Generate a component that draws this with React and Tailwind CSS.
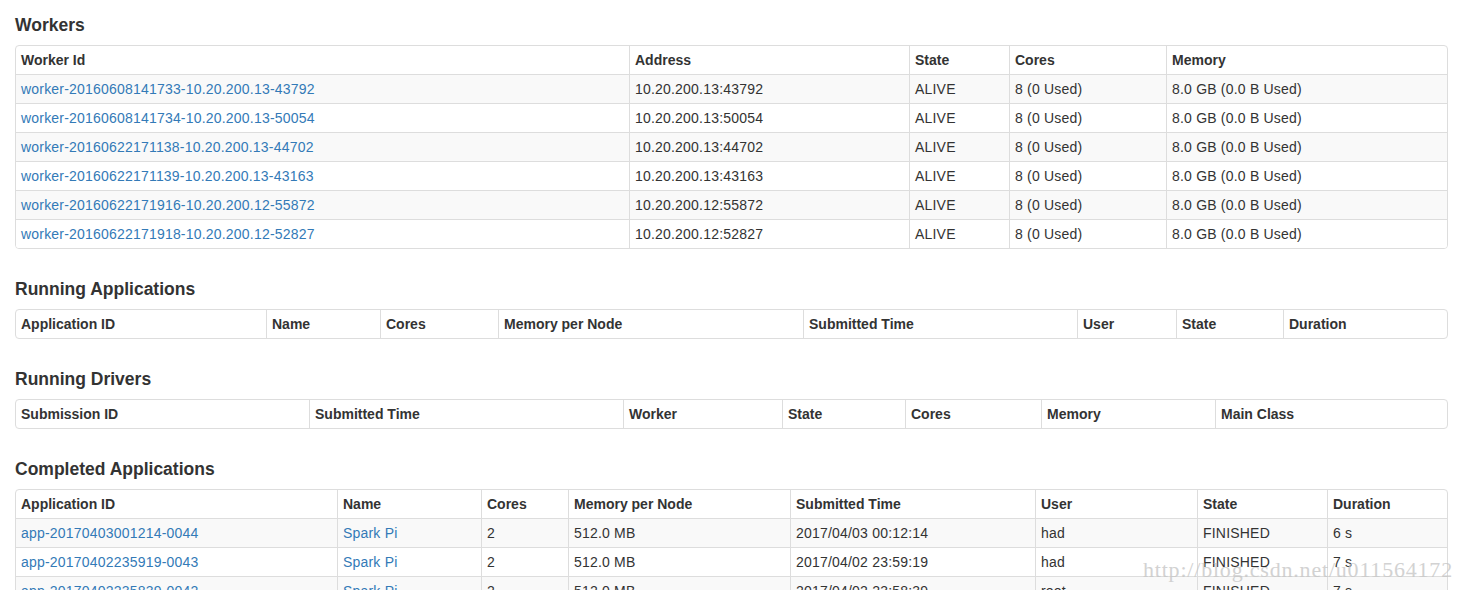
import React from 'react';

const workers = [
  ['worker-20160608141733-10.20.200.13-43792', '10.20.200.13:43792'],
  ['worker-20160608141734-10.20.200.13-50054', '10.20.200.13:50054'],
  ['worker-20160622171138-10.20.200.13-44702', '10.20.200.13:44702'],
  ['worker-20160622171139-10.20.200.13-43163', '10.20.200.13:43163'],
  ['worker-20160622171916-10.20.200.12-55872', '10.20.200.12:55872'],
  ['worker-20160622171918-10.20.200.12-52827', '10.20.200.12:52827'],
];

const completed = [
  ['app-20170403001214-0044', '2017/04/03 00:12:14', 'had', '6 s'],
  ['app-20170402235919-0043', '2017/04/02 23:59:19', 'had', '7 s'],
  ['app-20170402235839-0042', '2017/04/02 23:58:39', 'root', '7 s'],
  ['app-20170402235712-0041', '2017/04/02 23:57:12', 'root', '6 s'],
];

const Link = ({ children }) => (
  <a href="#" className="text-[#337ab7] no-underline">{children}</a>
);

const Table = ({ cols, head, rows }) => (
  <div className="w-[1433px] border border-[#dddddd] rounded-[4px] overflow-hidden">
    <table className="w-full table-fixed border-separate border-spacing-0">
      <colgroup>
        {cols.map((w, i) => (
          <col key={i} style={w ? { width: w } : undefined} />
        ))}
      </colgroup>
      <thead>
        <tr>
          {head.map((h, i) => (
            <th
              key={h}
              className={`text-left font-bold px-[5px] py-1 leading-5 border-[#dddddd] ${i ? 'border-l' : ''}`}
            >
              {h}
            </th>
          ))}
        </tr>
      </thead>
      <tbody>
        {rows.map((r, ri) => (
          <tr key={ri} className={ri % 2 === 0 ? 'bg-[#f9f9f9]' : 'bg-white'}>
            {r.map((c, ci) => (
              <td
                key={ci}
                className={`px-[5px] py-1 leading-5 tracking-[0.2px] border-t border-[#dddddd] whitespace-nowrap ${ci ? 'border-l' : ''}`}
              >
                {c}
              </td>
            ))}
          </tr>
        ))}
      </tbody>
    </table>
  </div>
);

const Heading = ({ children }) => (
  <h4 className="text-[17.5px] font-bold leading-5 mb-[10px]">{children}</h4>
);

export default function App() {
  return (
    <div
      className="relative bg-white text-[#333333] text-[14px] px-[15px] pt-[15px] pb-10"
      style={{ fontFamily: '"Liberation Sans", Arial, sans-serif' }}
    >
      <Heading>Workers</Heading>
      <Table
        cols={[613, 280, 100, 157, null]}
        head={['Worker Id', 'Address', 'State', 'Cores', 'Memory']}
        rows={workers.map(([id, addr]) => [
          <Link>{id}</Link>,
          addr,
          'ALIVE',
          '8 (0 Used)',
          '8.0 GB (0.0 B Used)',
        ])}
      />

      <div className="mt-[30px]">
        <Heading>Running Applications</Heading>
        <Table
          cols={[250, 114, 118, 305, 274, 99, 107, null]}
          head={['Application ID', 'Name', 'Cores', 'Memory per Node', 'Submitted Time', 'User', 'State', 'Duration']}
          rows={[]}
        />
      </div>

      <div className="mt-[30px]">
        <Heading>Running Drivers</Heading>
        <Table
          cols={[293, 314, 159, 123, 136, 174, null]}
          head={['Submission ID', 'Submitted Time', 'Worker', 'State', 'Cores', 'Memory', 'Main Class']}
          rows={[]}
        />
      </div>

      <div className="mt-[30px]">
        <Heading>Completed Applications</Heading>
        <Table
          cols={[321, 144, 87, 222, 245, 162, 130, null]}
          head={['Application ID', 'Name', 'Cores', 'Memory per Node', 'Submitted Time', 'User', 'State', 'Duration']}
          rows={completed.map(([id, time, user, dur]) => [
            <Link>{id}</Link>,
            <Link>Spark Pi</Link>,
            '2',
            '512.0 MB',
            time,
            user,
            'FINISHED',
            dur,
          ])}
        />
      </div>

      <div
        className="absolute left-[1143px] top-[553px] text-[22px] tracking-[0.8px] text-[#c4c4c4] whitespace-nowrap pointer-events-none"
        style={{ fontFamily: '"Liberation Serif", "Times New Roman", serif', opacity: 0.75 }}
      >
        http://blog.csdn.net/u011564172
      </div>
    </div>
  );
}
